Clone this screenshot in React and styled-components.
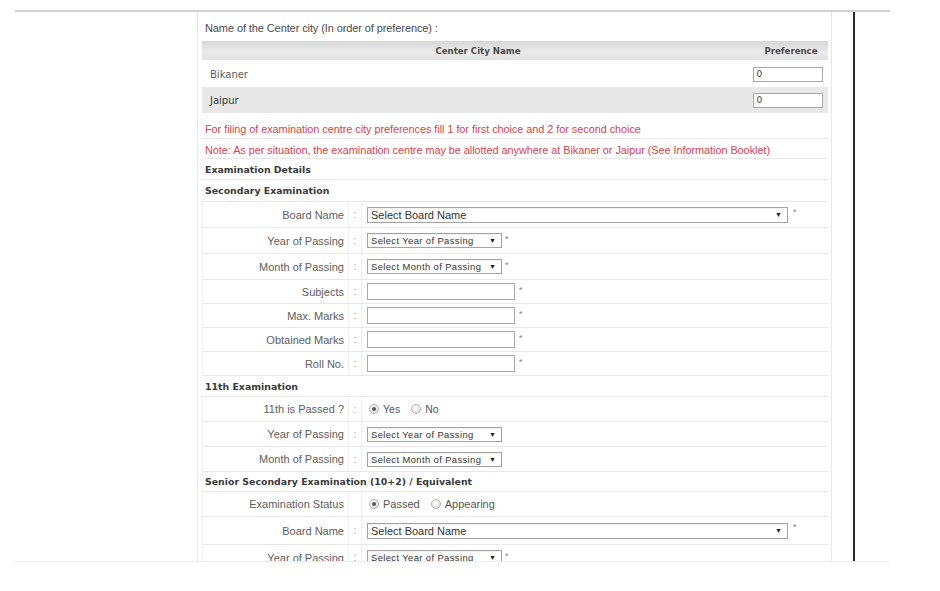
import React from "react";
import styled, { createGlobalStyle } from "styled-components";

const GlobalStyle = createGlobalStyle`
  html, body { margin: 0; padding: 0; background: #ffffff; }
  body { font-family: "Liberation Sans", Arial, sans-serif; color: #444; }
  * { box-sizing: border-box; }
`;

const Viewport = styled.div`
  margin: 10px 0 0 15px;
  width: 875px;
  height: 552px;
  border-top: 2px solid #d0d0d0;
  border-bottom: 1px solid #ececec;
  overflow: hidden;
  display: flex;
`;

const LeftSpace = styled.div`
  width: 182px;
  flex: none;
`;

const Panel = styled.div`
  width: 635px;
  flex: none;
  border-left: 1px solid #e6e6e6;
  border-right: 1px solid #e6e6e6;
  padding: 3px 3px 0 4px;
`;

const Gutter = styled.div`
  width: 21px;
  flex: none;
`;

const ScrollEdge = styled.div`
  width: 2px;
  flex: none;
  background: #2b2b2b;
`;

const TitleRow = styled.div`
  height: 26px;
  display: flex;
  align-items: center;
  padding-left: 3px;
  font-size: 11px;
  letter-spacing: -0.1px;
  color: #4a4a4a;
`;

const CityGrid = styled.div`
  display: grid;
  grid-template-columns: 1fr 74px;
  margin-bottom: 4px;
`;

const CityHead = styled.div`
  height: 20px;
  display: flex;
  align-items: center;
  justify-content: center;
  font-family: "DejaVu Sans", Verdana, sans-serif;
  font-weight: bold;
  font-size: 8.6px;
  color: #4a4a4a;
  background: linear-gradient(to bottom, #d6d6d6 0%, #eaeaea 55%, #e3e3e3 100%);
  border-bottom: 1px solid #fafafa;
`;

const CityCell = styled.div`
  height: 26px;
  display: flex;
  align-items: center;
  justify-content: ${(p) => (p.$pref ? "center" : "flex-start")};
  padding-left: ${(p) => (p.$pref ? "0" : "8px")};
  font-family: "DejaVu Sans", Verdana, sans-serif;
  font-size: 10px;
  color: ${(p) => (p.$alt ? "#3a3a3a" : "#5a5a5a")};
  background: ${(p) => (p.$alt ? "#e8e8e8" : "#ffffff")};
`;

const PrefInput = styled.div`
  width: 70px;
  height: 15px;
  border: 1px solid #a8a8a8;
  background: #fff;
  font-size: 9px;
  color: #444;
  padding-left: 3px;
  line-height: 13px;
  margin-left: -7px;
`;

const NoteRow = styled.div`
  height: ${(p) => p.$h}px;
  display: flex;
  align-items: center;
  padding: 2px 0 0 3px;
  font-size: 10.9px;
  letter-spacing: -0.05px;
  color: #d9434e;
  border-bottom: 1px solid #e8e8e8;
  white-space: nowrap;
`;

const SectionRow = styled.div`
  height: ${(p) => p.$h}px;
  display: flex;
  align-items: center;
  padding-left: 3px;
  font-family: "DejaVu Sans", Verdana, sans-serif;
  font-weight: bold;
  font-size: 9.4px;
  color: #3a3a3a;
  border-bottom: 1px solid #e8e8e8;
`;

const FieldRow = styled.div`
  height: ${(p) => p.$h}px;
  display: grid;
  grid-template-columns: 147px 13px 1fr;
  border-bottom: 1px solid #e8e8e8;
`;

const LabelCell = styled.div`
  display: flex;
  align-items: center;
  justify-content: flex-end;
  padding-right: 4px;
  font-size: 11px;
  color: #5e5e5e;
  border-right: 1px solid #efefef;
  border-left: 1px solid #efefef;
`;

const ColonCell = styled.div`
  display: flex;
  align-items: center;
  justify-content: center;
  font-size: 10px;
  color: #a0a0a0;
  border-right: 1px solid #efefef;
`;

const ControlCell = styled.div`
  display: flex;
  align-items: center;
  padding-left: 5px;
`;

const Select = styled.div`
  width: ${(p) => p.$w}px;
  height: ${(p) => (p.$small ? 15 : 16)}px;
  border: 1px solid #a3a3a3;
  background: #fff;
  display: flex;
  align-items: center;
  justify-content: space-between;
  padding: 0 5px 0 3px;
  font-size: ${(p) => (p.$small ? 9.4 : 11)}px;
  letter-spacing: ${(p) => (p.$small ? 0.4 : 0)}px;
  color: #333;
  box-shadow: inset 0 1px 1px rgba(0, 0, 0, 0.06);
`;

const Arrow = styled.span`
  font-size: 7px;
  color: #222;
  letter-spacing: 0;
`;

const TextBox = styled.div`
  width: 148px;
  height: 17px;
  border: 1px solid #a8a8a8;
  background: #fff;
  box-shadow: inset 0 1px 1px rgba(0, 0, 0, 0.05);
`;

const Star = styled.span`
  align-self: flex-start;
  margin-top: ${(p) => p.$top || 6}px;
  margin-left: ${(p) => p.$left || 4}px;
  font-size: 9px;
  color: #888;
`;

const RadioGroup = styled.div`
  display: flex;
  align-items: center;
  padding-left: 2px;
`;

const RadioDot = styled.span`
  width: 10px;
  height: 10px;
  border-radius: 50%;
  border: 1px solid #b0b0b0;
  background: radial-gradient(circle at 40% 35%, #ffffff, #d8d8d8);
  display: inline-flex;
  align-items: center;
  justify-content: center;
  margin-right: 4px;
  &::after {
    content: "";
    width: 4px;
    height: 4px;
    border-radius: 50%;
    background: ${(p) => (p.$on ? "#555" : "transparent")};
  }
`;

const RadioText = styled.span`
  font-size: ${(p) => p.$size || 11}px;
  color: #555;
  margin-right: ${(p) => p.$gap || 0}px;
`;

function Field({ h, label, colon = true, children }) {
  return (
    <FieldRow $h={h}>
      <LabelCell>{label}</LabelCell>
      <ColonCell>{colon ? ":" : ""}</ColonCell>
      <ControlCell>{children}</ControlCell>
    </FieldRow>
  );
}

function Dropdown({ w, small, text, star = true }) {
  return (
    <>
      <Select $w={w} $small={small}>
        <span>{text}</span>
        <Arrow>▼</Arrow>
      </Select>
      {star && (
        <Star $top={small ? 6 : 5} $left={small ? 3 : 5}>
          *
        </Star>
      )}
    </>
  );
}

function Input() {
  return (
    <>
      <TextBox />
      <Star $top={5}>*</Star>
    </>
  );
}

function Radios({ options, checked, size }) {
  return (
    <RadioGroup>
      {options.map((o, i) => (
        <React.Fragment key={o}>
          <RadioDot $on={i === checked} />
          <RadioText $size={size} $gap={i === 0 ? 11 : 0}>
            {o}
          </RadioText>
        </React.Fragment>
      ))}
    </RadioGroup>
  );
}

export default function App() {
  return (
    <>
      <GlobalStyle />
      <Viewport>
        <LeftSpace />
        <Panel>
          <TitleRow>Name of the Center city (In order of preference) :</TitleRow>
          <CityGrid>
            <CityHead>Center City Name</CityHead>
            <CityHead>Preference</CityHead>
            <CityCell>Bikaner</CityCell>
            <CityCell $pref>
              <PrefInput>0</PrefInput>
            </CityCell>
            <CityCell $alt>Jaipur</CityCell>
            <CityCell $alt $pref>
              <PrefInput>0</PrefInput>
            </CityCell>
          </CityGrid>
          <NoteRow $h={22}>
            For filing of examination centre city preferences fill 1 for first choice and 2 for second choice
          </NoteRow>
          <NoteRow $h={20}>
            Note: As per situation, the examination centre may be allotted anywhere at Bikaner or Jaipur (See Information Booklet)
          </NoteRow>
          <SectionRow $h={21}>Examination Details</SectionRow>
          <SectionRow $h={22}>Secondary Examination</SectionRow>
          <Field h={26} label="Board Name">
            <Dropdown w={421} text="Select Board Name" />
          </Field>
          <Field h={26} label="Year of Passing">
            <Dropdown w={135} small text="Select Year of Passing" />
          </Field>
          <Field h={26} label="Month of Passing">
            <Dropdown w={135} small text="Select Month of Passing" />
          </Field>
          <Field h={24} label="Subjects">
            <Input />
          </Field>
          <Field h={24} label="Max. Marks">
            <Input />
          </Field>
          <Field h={24} label="Obtained Marks">
            <Input />
          </Field>
          <Field h={24} label="Roll No.">
            <Input />
          </Field>
          <SectionRow $h={21}>11th Examination</SectionRow>
          <Field h={25} label="11th is Passed ?">
            <Radios options={["Yes", "No"]} checked={0} size={10.5} />
          </Field>
          <Field h={25} label="Year of Passing">
            <Dropdown w={135} small text="Select Year of Passing" star={false} />
          </Field>
          <Field h={25} label="Month of Passing">
            <Dropdown w={135} small text="Select Month of Passing" star={false} />
          </Field>
          <SectionRow $h={20}>Senior Secondary Examination (10+2) / Equivalent</SectionRow>
          <Field h={25} label="Examination Status" colon={false}>
            <Radios options={["Passed", "Appearing"]} checked={0} size={11} />
          </Field>
          <Field h={28} label="Board Name">
            <Dropdown w={421} text="Select Board Name" />
          </Field>
          <Field h={26} label="Year of Passing">
            <Dropdown w={135} small text="Select Year of Passing" />
          </Field>
        </Panel>
        <Gutter />
        <ScrollEdge />
      </Viewport>
    </>
  );
}
